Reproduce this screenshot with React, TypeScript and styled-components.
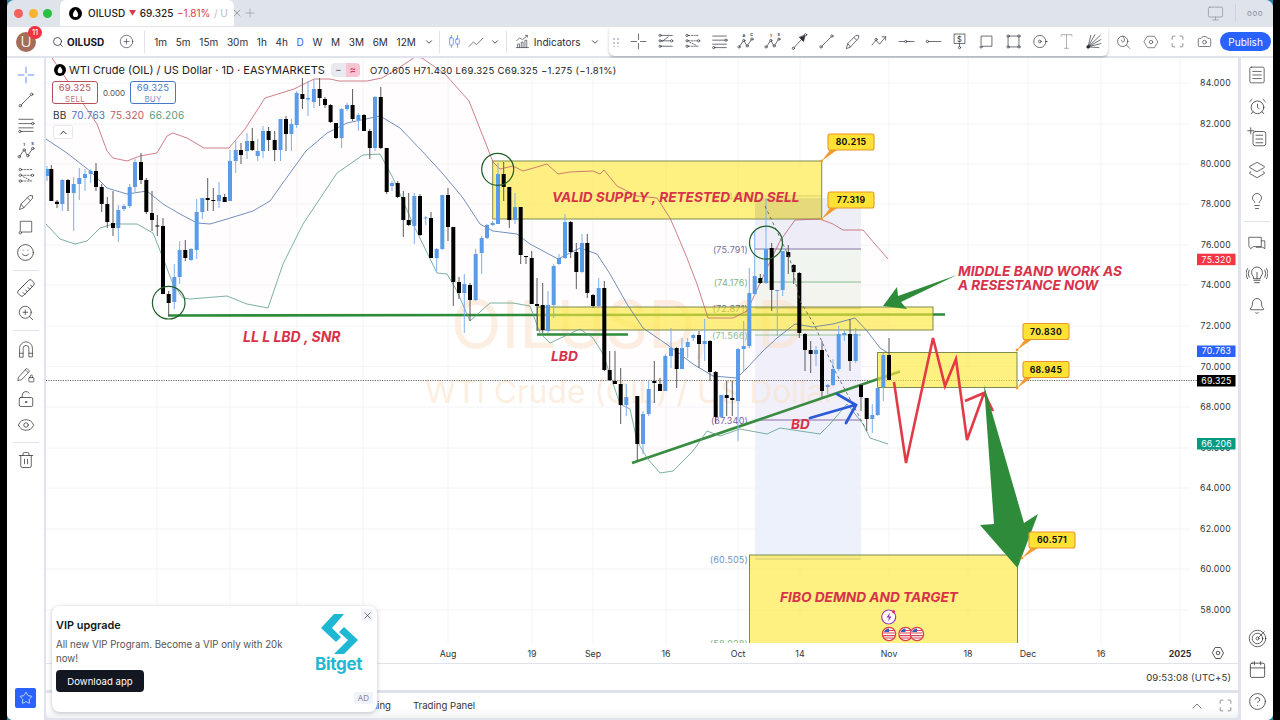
import React from 'react';
import styled, { createGlobalStyle } from 'styled-components';
import {
  AlarmClock, Bell, Calendar, Camera, ChevronDown, ChevronUp, CircleHelp, CirclePlus, Eye,
  Layers2, Lightbulb, LockKeyholeOpen, Monitor, Plus, Ruler, Search, Smile, Star, Trash2, X, ZoomIn,
} from 'lucide-react';

const GlobalStyle = createGlobalStyle`
  html, body { margin: 0; padding: 0; background: #000; overflow: hidden; }
  body { font-family: Inter, "Liberation Sans", sans-serif; color: #131722; }
`;

const Frame = styled.div`
  width: 1280px;
  height: 720px;
  padding: 0 7px;
  box-sizing: border-box;
  background: linear-gradient(90deg, #000 0 7px, #2b86a8 7px 1273px, #000 1273px);
`;

const Window = styled.div`
  position: relative;
  height: 720px;
  display: flex;
  flex-direction: column;
  background: #e0e3eb;
  border-radius: 8px 8px 6px 6px;
  overflow: hidden;
`;

const TitleBar = styled.div`
  height: 26px;
  flex: none;
  display: flex;
  align-items: center;
  background: #dfe3ea;
  padding-left: 7px;
`;

const Light = styled.span<{ $c: string }>`
  width: 9px;
  height: 9px;
  border-radius: 50%;
  margin-right: 5.5px;
  background: ${(p) => p.$c};
`;

const Tab = styled.div`
  width: 174px;
  height: 26px;
  margin-left: 2.5px;
  display: flex;
  align-items: center;
  gap: 3.5px;
  padding-left: 9px;
  box-sizing: border-box;
  background: #fff;
  border-radius: 6px 6px 0 0;
  font-size: 10px;
  font-weight: 500;
  white-space: nowrap;
  color: #222;
`;

const TabIcon = styled.span`
  display: flex;
  margin-right: 2.5px;
`;

const Down = styled.span`
  color: #d9394a;
  font-weight: 400;
`;

const DownMark = styled(Down)`
  font-size: 7.5px;
`;

const Fade = styled.span`
  color: #b8bcc6;
  font-weight: 400;
`;

const TabClose = styled.span`
  display: flex;
  margin-left: auto;
  margin-right: 8px;
  color: #777;
`;

const NewTab = styled.span`
  display: flex;
  margin-left: 9px;
  color: #8b8f99;
`;

const TitleRight = styled.div`
  margin-left: auto;
  display: flex;
  align-items: center;
  color: #8b8f99;
  font-size: 8px;
  letter-spacing: 0.5px;
  gap: 11px;
  padding-right: 10px;
`;

const TitleDivider = styled.span`
  width: 1px;
  height: 18px;
  background: #cfd3db;
`;

const TopBar = styled.div`
  height: 29px;
  margin-top: 1px;
  flex: none;
  display: flex;
  align-items: center;
  background: #fff;
  font-size: 10px;
  color: #2a2e39;
  position: relative;
`;

const Avatar = styled.div`
  position: relative;
  width: 20px;
  height: 20px;
  margin-left: 9px;
  border-radius: 50%;
  background: #a46d58;
  color: #fff;
  font-size: 15px;
  font-weight: 300;
  line-height: 20px;
  text-align: center;
`;

const Badge = styled.span`
  position: absolute;
  top: -6px;
  left: 12px;
  width: 14px;
  height: 13px;
  border-radius: 7px;
  background: #ef3340;
  color: #fff;
  font-size: 7.5px;
  line-height: 13px;
  font-weight: 500;
`;

const SymbolBox = styled.div`
  display: flex;
  align-items: center;
  gap: 3px;
  margin-left: 16px;
  font-weight: 700;
  font-size: 10px;
  color: #131722;
`;

const Spaced = styled.span<{ $l: number }>`
  display: flex;
  align-items: center;
  margin-left: ${(p) => p.$l}px;
`;

const Sep = styled.span<{ $l: number }>`
  width: 1px;
  height: 22px;
  background: #e0e3eb;
  margin-left: ${(p) => p.$l}px;
`;

const Intervals = styled.div`
  display: flex;
  gap: 8.7px;
  margin-left: 9px;
  font-size: 10px;
`;

const Interval = styled.span<{ $on?: boolean }>`
  color: ${(p) => (p.$on ? '#2962ff' : '#2a2e39')};
`;

const DrawCard = styled.div`
  position: relative;
  width: 499px;
  height: 29px;
  flex: none;
  margin-left: 9px;
  display: flex;
  align-items: center;
  background: #fff;
  border-radius: 0 0 6px 6px;
  box-shadow: 0 2px 3px rgba(90, 96, 110, 0.35);
  padding-left: 3px;
  box-sizing: border-box;
`;

const Dots = styled.span`
  width: 9px;
  height: 10px;
  margin-right: 5px;
  background-image: radial-gradient(#c5c8d0 0.8px, transparent 1px);
  background-size: 4px 4px;
`;

const ToolSlot = styled.span`
  width: 26.75px;
  display: flex;
  flex: none;
  justify-content: center;
`;

const Publish = styled.button`
  width: 51px;
  height: 19px;
  flex: none;
  margin-left: 2px;
  padding: 0;
  border: 0;
  border-radius: 10px;
  background: #2962ff;
  color: #fff;
  font-family: inherit;
  font-size: 10px;
`;

const Body = styled.div`
  flex: 1;
  min-height: 0;
  display: flex;
  gap: 2px;
  margin-top: 2px;
`;

const SideBar = styled.div<{ $w: number; $top: number }>`
  width: ${(p) => p.$w}px;
  flex: none;
  display: flex;
  flex-direction: column;
  align-items: center;
  padding-top: ${(p) => p.$top}px;
  box-sizing: border-box;
  background: #fff;
  color: #333;
`;

const SideItem = styled.span`
  height: 25.4px;
  display: flex;
  align-items: center;
  justify-content: center;
  flex: none;
`;

const RightItem = styled(SideItem)`
  height: 31.6px;
`;

const SideRule = styled.span`
  width: 26px;
  height: 1px;
  flex: none;
  margin: 4.5px 0;
  background: #e0e3eb;
`;

const StarButton = styled.span`
  margin-top: auto;
  margin-bottom: 12px;
  width: 21px;
  height: 20px;
  display: flex;
  align-items: center;
  justify-content: center;
  border-radius: 2px;
  background: #2962ff;
  color: #fff;
`;

const BottomTools = styled.div`
  margin-top: auto;
  padding-bottom: 3px;
  display: flex;
  flex-direction: column;
  align-items: center;
  color: #333;
`;

const Main = styled.div`
  width: 1192px;
  flex: none;
  display: flex;
  flex-direction: column;
  margin-right: 1px;
`;

const ChartPane = styled.div`
  position: relative;
  height: 605px;
  flex: none;
  background: #fff;
`;

const ChartSvg = styled.svg`
  display: block;
  width: 1192px;
  height: 605px;
  font-family: Inter, "Liberation Sans", sans-serif;
`;

const PriceText = styled.text`
  font-size: 8.7px;
  letter-spacing: 0.25px;
  fill: #333;
  text-anchor: end;
`;

const TimeText = styled.text<{ $b?: boolean }>`
  font-size: 8.8px;
  fill: #333;
  font-weight: ${(p) => (p.$b ? 700 : 400)};
  text-anchor: middle;
`;

const FibText = styled.text`
  font-size: 9px;
  letter-spacing: 0.2px;
  text-anchor: end;
`;

const Note = styled.text<{ $s: number }>`
  font-size: ${(p) => p.$s}px;
  font-weight: 700;
  font-style: italic;
  fill: #d8324a;
`;

const TagLabel = styled.text`
  font-size: 8.6px;
  font-weight: 700;
  letter-spacing: 0.35px;
  fill: #111;
  text-anchor: middle;
`;

const PriceTagLabel = styled.text`
  font-size: 8.7px;
  letter-spacing: 0.25px;
  fill: #fff;
  text-anchor: middle;
`;

const WaterBig = styled.text`
  font-size: 66px;
  fill: #fbe6cf;
  opacity: 0.62;
`;

const WaterSmall = styled.text`
  font-size: 31.6px;
  fill: #fbe6cf;
  opacity: 0.62;
`;

const LegendBox = styled.div`
  position: absolute;
  top: 5px;
  left: 6px;
  display: flex;
  flex-direction: column;
  align-items: flex-start;
  pointer-events: none;
`;

const LegendTitle = styled.div`
  display: flex;
  align-items: center;
  height: 14px;
  white-space: nowrap;
  font-size: 11px;
  color: #222;
`;

const OilDot = styled.span<{ $s: number }>`
  width: ${(p) => p.$s}px;
  height: ${(p) => p.$s}px;
  flex: none;
  display: flex;
`;

const LegendIcon = styled.span`
  display: flex;
  margin-left: 2px;
`;

const TitleText = styled.span`
  margin-left: 3px;
  width: 262px;
`;

const StatusPill = styled.span`
  width: 29px;
  height: 14px;
  display: flex;
  border-radius: 4px;
  overflow: hidden;
  font-size: 9px;
  line-height: 14px;
  text-align: center;
`;

const PillPart = styled.span<{ $pink?: boolean }>`
  flex: 1;
  background: ${(p) => (p.$pink ? '#f9c4d3' : '#e8eaef')};
  color: ${(p) => (p.$pink ? '#d83c5e' : '#777')};
  font-weight: 700;
`;

const Ohlc = styled.span`
  margin-left: 10px;
  font-size: 9.5px;
  letter-spacing: 0.3px;
`;

const OrderRow = styled.div`
  display: flex;
  align-items: center;
  margin-top: 4px;
`;

const OrderBox = styled.div<{ $c: string }>`
  width: 46px;
  height: 23px;
  box-sizing: border-box;
  border: 1px solid ${(p) => p.$c};
  border-radius: 3px;
  background: #fff;
  color: ${(p) => p.$c};
  font-size: 9.5px;
  letter-spacing: 0.2px;
  line-height: 10.5px;
  text-align: center;
  padding-top: 1px;
`;

const OrderSub = styled.div`
  font-size: 8px;
  opacity: 0.8;
`;

const Spread = styled.span`
  width: 32px;
  text-align: center;
  font-size: 8px;
  color: #555;
`;

const BbRow = styled.div`
  display: flex;
  gap: 5px;
  margin-top: 5px;
  margin-left: 1px;
  font-size: 10px;
  letter-spacing: 0.25px;
  color: #333;
`;

const BbValue = styled.span<{ $c: string }>`
  color: ${(p) => p.$c};
`;

const Collapse = styled.div`
  width: 20px;
  height: 14px;
  margin-top: 4px;
  margin-left: 1px;
  display: flex;
  align-items: center;
  justify-content: center;
  border: 1px solid #e6e8ee;
  border-radius: 2px;
  box-sizing: border-box;
  background: #fff;
`;

const StatusBar = styled.div`
  height: 27px;
  flex: none;
  display: flex;
  align-items: center;
  justify-content: flex-end;
  padding-right: 7px;
  background: #fff;
  border-top: 1px solid #e0e3eb;
  box-sizing: border-box;
  font-size: 9.6px;
  letter-spacing: 0.1px;
  color: #333;
`;

const BottomPanel = styled.div`
  height: 25px;
  flex: none;
  margin-top: 3px;
  display: flex;
  align-items: center;
  padding-left: 298px;
  padding-right: 5px;
  gap: 22px;
  background: linear-gradient(#fff 60%, #f2f3f5);
  border-radius: 0 0 4px 4px;
  font-size: 9.6px;
  color: #333;
`;

const PanelIcons = styled.span`
  margin-left: auto;
  display: flex;
  align-items: center;
  gap: 13px;
`;

const AdCard = styled.div`
  position: absolute;
  left: 45px;
  top: 606px;
  width: 325px;
  height: 106px;
  padding: 11px 4px 0;
  box-sizing: border-box;
  display: flex;
  background: #fff;
  border-radius: 8px;
  box-shadow: 0 1px 4px rgba(40, 50, 70, 0.3);
`;

const AdText = styled.div`
  width: 232px;
`;

const AdHead = styled.div`
  font-size: 10.9px;
  font-weight: 600;
  line-height: 16px;
  color: #131722;
`;

const AdBody = styled.div`
  margin-top: 5px;
  font-size: 9.7px;
  line-height: 13.5px;
  color: #555;
`;

const AdButton = styled.button`
  display: block;
  width: 88px;
  height: 22px;
  margin-top: 5px;
  padding: 0;
  border: 0;
  border-radius: 4px;
  background: #131722;
  color: #fff;
  font-family: inherit;
  font-size: 9.6px;
`;

const BitgetBox = styled.div`
  margin-left: 27px;
  margin-top: -4px;
  display: flex;
  flex-direction: column;
  align-items: center;
`;

const BitgetName = styled.div`
  margin-top: -1px;
  font-size: 17px;
  font-weight: 700;
  letter-spacing: -0.3px;
  line-height: 20px;
  color: #1fb8d3;
`;

const AdClose = styled.span`
  position: absolute;
  top: 3px;
  right: 4px;
  width: 12px;
  height: 12px;
  display: flex;
  align-items: center;
  justify-content: center;
  background: #f0f3fa;
  border-radius: 2px;
  color: #222;
`;

const AdTag = styled.span`
  position: absolute;
  right: 4px;
  bottom: 8px;
  width: 19px;
  height: 12px;
  line-height: 12px;
  text-align: center;
  background: #f0f3fa;
  border-radius: 2px;
  font-size: 8px;
  color: #888;
`;

const IconSvg = styled.svg`
  display: block;
  fill: none;
  stroke: currentColor;
  stroke-width: 1;
  stroke-linecap: round;
  font-family: Inter, "Liberation Sans", sans-serif;
`;

const TinyLetter = styled.text`
  font-size: 5.5px;
  font-weight: 700;
  fill: currentColor;
  stroke: none;
  text-anchor: middle;
`;

const Dollar = styled.text`
  font-size: 11px;
  fill: currentColor;
  stroke: none;
  text-anchor: middle;
`;

const Dot = ({ x, y }: { x: number; y: number }) => <circle cx={x} cy={y} r={1.7} />;

const wave = (
  <>
    <path d="M5.5 21l5-7.5 M12.5 14l3 5.5 M17.5 19l5-7.5" />
    <Dot x={4.5} y={22} /><Dot x={11.5} y={12.5} /><Dot x={16.5} y={20.5} /><Dot x={23.5} y={10.5} />
  </>
);

const glyphs: Record<string, React.ReactNode> = {
  cross: <path d="M14 3v8 M14 17v8 M3 14h8 M17 14h8" />,
  line: <><path d="M7.5 20.5l13-13" /><Dot x={6} y={22} /><Dot x={22} y={6} /></>,
  pitch: <><path d="M8 5h16 M8 13h13 M8 21h16 M9 14l9-7" /><Dot x={6} y={5} /><Dot x={23} y={13} /><Dot x={6} y={13} /><Dot x={6} y={21} /></>,
  channel: <><path d="M8 5h16 M8 13h13 M8 21h16 M10 15l10 5" strokeDasharray="2 2" /><Dot x={6} y={5} /><Dot x={23} y={13} /><Dot x={6} y={13} /><Dot x={6} y={21} /></>,
  rows: <><path d="M4 6h20 M4 12h18 M4 18h20 M8 23h16" /><Dot x={23.5} y={12} /><Dot x={5.5} y={23} /></>,
  waveAC: <>{wave}<TinyLetter x={11.5} y={7}>A</TinyLetter><TinyLetter x={23} y={6}>C</TinyLetter></>,
  wave15: <>{wave}<TinyLetter x={11.5} y={7}>1</TinyLetter><TinyLetter x={23} y={6}>5</TinyLetter></>,
  arrowLine: <><path d="M6 23L17 11" /><path d="M22 5l-2 9-6-6z" fill="currentColor" /><Dot x={5} y={24} /><Dot x={23} y={4} /></>,
  pen: <><path d="M5 24l2-7L19 5l4 0 0 4L11 22z M7 17l4 5 M16 8l4 4" /></>,
  zigzag: <><path d="M3 19l6-7 5 6 9-11 M18 7h5v5" /><Dot x={9} y={11} /></>,
  midDot: <><path d="M3 14h8 M15 14h10" /><Dot x={13} y={14} /></>,
  rayDot: <><path d="M7 14h18" /><Dot x={5} y={14} /></>,
  price: <><rect x="6" y="3" width="16" height="14" /><Dollar x={14} y={14}>$</Dollar><path d="M14 17v4" /><Dot x={14} y={23} /></>,
  comment: <><path d="M8 21h14V6H6v13" /><Dot x={6} y={22} /></>,
  square: <><path d="M7.5 6h13 M7.5 22h13 M6 7.5v13 M22 7.5v13" /><Dot x={6} y={6} /><Dot x={22} y={6} /><Dot x={6} y={22} /><Dot x={22} y={22} /></>,
  ring: <><circle cx="13" cy="14" r="9" /><circle cx="13" cy="14" r="2" /><path d="M22 14l2 0" /></>,
  type: <path d="M6 6V4h16v2 M14 4v20 M11 24h6" />,
  fan: <><path d="M6 22L24 5 M6 22L25 11 M6 22L25 17 M6 22L16 4 M6 22L10 5 M6 22L22 23" /><circle cx="6" cy="22" r="2" fill="currentColor" /></>,
  candle: <><path d="M9 4v20 M19 4v20" /><rect x="6" y="8" width="6" height="12" rx="1" fill="#fff" /><rect x="16" y="10" width="6" height="8" rx="1" fill="#fff" /></>,
  lineChart: <path d="M3 21l7-7 5 4 10-10" />,
  barsUp: <><path d="M4 24h20 M6 24v-6h3v6 M12 24v-9h3v9 M18 24v-12h3v12 M4 13l5-5 5 3 8-7 M19 4h3v3" /></>,
  flameZoom: <><circle cx="12" cy="13" r="8" /><path d="M18 19l5 5 M12 5c2 3 4 5 2 8-1 2-4 1-4-2" /></>,
  hexDot: <><path d="M8 4h12l6 10-6 10H8L2 14z" /><circle cx="14" cy="14" r="3" /></>,
  corners: <path d="M4 10V6a2 2 0 0 1 2-2h3 M19 4h3a2 2 0 0 1 2 2v4 M24 18v4a2 2 0 0 1-2 2h-3 M9 24H6a2 2 0 0 1-2-2v-4" />,
  listDoc: <><rect x="4" y="3" width="20" height="22" rx="2" /><path d="M8 9h12 M8 14h12 M8 19h12" /></>,
  listPlus: <><rect x="8" y="6" width="17" height="19" rx="3" /><path d="M12 11h9 M12 16h9 M12 21h9 M1 5h8 M5 1v8" /></>,
  chats: <path d="M3 6h17v13H9l-4 3-2-3z M20 11h5v11l-3-2H13" />,
  bulbWave: <><path d="M10 22h8 M11 25h6 M9 17a7 7 0 1 1 10 0l-1 3h-8z M14 12v8" /><path d="M4 9a9 9 0 0 0 0 9 M2 7a12 12 0 0 0 0 13 M24 9a9 9 0 0 1 0 9 M26 7a12 12 0 0 1 0 13" /></>,
  pencilLock: <><path d="M4 18L15 6l4 4L8 22l-5 1z M13 8l4 4" /><rect x="18" y="19" width="7" height="6" rx="1" /><path d="M20 19v-2a1.5 1.5 0 0 1 3 0v2" /></>,
  horseshoe: <path d="M5 25V13a9 9 0 0 1 18 0v12h-5V13a4 4 0 0 0-8 0v12z M5 20h5 M18 20h5" />,
  target: <><circle cx="14" cy="14" r="11" /><circle cx="14" cy="14" r="7" /><circle cx="14" cy="14" r="2" /><path d="M15 13l8-8" /></>,
};

const Glyph = ({ name, size = 21, color }: { name: string; size?: number; color?: string }) => (
  <IconSvg viewBox="0 0 28 28" width={size} height={size} style={color ? { color } : undefined}>
    {glyphs[name]}
  </IconSvg>
);

const OilIcon = ({ size }: { size: number }) => (
  <OilDot $s={size}>
    <svg viewBox="0 0 12 12" width={size} height={size}>
      <circle cx="6" cy="6" r="6" fill="#000" />
      <path d="M6 2.2C7.6 4.3 8.4 5.5 8.4 6.9A2.4 2.4 0 0 1 3.6 6.9C3.6 5.5 4.4 4.3 6 2.2z" fill="#fff" />
    </svg>
  </OilDot>
);

type Bar = [number, number, number, number, number, 0 | 1];

const bars: Bar[] = [
  [47, 168, 175, 165, 180, 1], [51.3, 168, 200, 164, 200, 0], [57, 200.7, 203, 199, 207, 0], [62.3, 179, 203, 178, 210, 1],
  [68, 179, 192, 178, 210, 0], [73.7, 183, 192, 176, 230, 1], [79.3, 177, 183, 167, 199, 1], [85, 173, 177, 168, 190, 1],
  [90.7, 170, 173, 168, 182, 1], [96, 170, 186, 162, 190, 0], [101.7, 186, 203, 183, 211, 0], [107.3, 203, 221, 196, 227, 0],
  [113, 222, 227, 190, 235, 0], [118.3, 209, 227, 204, 241, 1], [124, 205, 208, 203, 210, 1], [129.7, 186, 205, 183, 207, 1],
  [135, 161, 186, 158, 191, 1], [141, 161, 179, 152, 183, 0], [146.3, 179, 211, 177, 213, 0], [152, 212, 219, 190, 230, 0],
  [157.3, 224.5, 225.5, 214, 235, 0], [163, 225, 293, 217, 293, 0], [168.7, 293, 302, 290, 315, 0], [174.3, 276, 301, 263, 308, 1],
  [179.7, 249, 276, 240, 283, 1], [185.3, 249, 257, 239, 260, 0], [191, 248, 259, 247, 260, 1], [196.7, 211, 249, 198, 258, 1],
  [202.3, 197, 211, 197, 218, 1], [207.7, 197, 199, 177, 210, 0], [213.3, 199, 200, 187, 210, 0], [219, 194, 200, 181, 207, 1],
  [224.7, 196, 201, 193, 201, 0], [230, 160, 200, 149, 200, 1], [235.7, 149, 160, 140, 172, 1], [241, 149, 154, 142, 163, 0],
  [247, 140, 150, 132, 158, 1], [252.3, 140, 149, 127, 150, 0], [257.7, 150, 155, 138, 160, 1], [263, 130, 150, 125, 157, 1],
  [268.6, 130, 139, 126, 150, 0], [274.7, 139, 149, 130, 160, 0], [280.5, 118, 149, 118, 160, 1], [286, 118, 133, 115, 150, 0],
  [291.4, 123, 133, 118, 150, 1], [296.7, 92, 124, 90, 127, 1], [302.4, 93, 98, 77, 108, 0], [308, 97, 98.5, 80, 115, 1],
  [313.9, 88, 101, 78, 107, 1], [319.6, 88, 97, 77, 105, 0], [325, 98, 104, 96, 107, 0], [330.6, 104, 121, 103, 122, 0],
  [336, 122, 137, 122, 138, 0], [341.6, 108, 137, 107, 147, 1], [347, 104, 108, 102, 110, 1], [352.6, 104, 118, 88, 120, 0],
  [358.4, 114, 119, 112, 130, 1], [364, 114, 130, 113, 130, 0], [369.8, 130, 147, 128, 158, 0], [375, 96, 147, 95, 150, 1],
  [380.8, 96, 147, 86, 148, 0], [386.7, 147, 191, 147, 193, 0], [392, 182, 185, 180, 190, 1], [397.7, 182, 196, 180, 197, 0],
  [403.3, 196, 219, 190, 236, 0], [408.7, 219, 224, 192, 225, 0], [414.3, 195, 225, 192, 243, 1], [420, 195, 234, 193, 235, 0],
  [425.7, 216.5, 217.5, 215, 224, 1], [431, 217, 257, 211, 257, 0], [436.7, 248, 257, 247, 270, 1], [442.3, 194, 248, 194, 249, 1],
  [448, 194, 226, 187, 240, 0], [453.3, 226, 281, 226, 305, 0], [459, 281, 292, 276, 298, 0], [464.3, 283, 292, 273, 332, 1],
  [470, 284, 299, 282, 320, 0], [475.7, 253, 299, 248, 300, 1], [481.7, 237, 252, 235, 273, 1], [487, 224, 237, 223, 238, 1],
  [492.7, 222, 224, 220, 225, 1], [498, 173, 223, 162, 223, 1], [503.7, 173, 186, 161, 200, 0], [509.3, 186, 219, 186, 227, 0],
  [515, 206, 219, 192, 223, 1], [520.7, 206, 254, 206, 263, 0], [526, 255, 256, 255, 263, 0], [531.7, 257, 303, 250, 303, 0],
  [537, 303, 305, 277, 330, 0], [542.7, 304, 329, 282, 332, 0], [548, 304, 330, 290, 332, 1], [553.7, 265, 304, 263, 317, 1],
  [559, 257, 263, 253, 264, 1], [565, 221, 257, 213, 258, 1], [570.7, 221, 251, 220, 257, 0], [576.3, 251, 271, 242, 288, 0],
  [582, 242, 271, 233, 272, 1], [587.3, 242, 292, 233, 297, 0], [593, 294, 305, 293, 307, 0], [598.7, 287, 305, 277, 307, 1],
  [604.3, 287, 369, 280, 370, 0], [609.7, 369, 379, 350, 380, 0], [615, 380, 383, 350, 383, 0], [620.7, 383, 404, 367, 423, 0],
  [626.3, 396, 404, 383, 415, 1], [637.3, 395, 443, 395, 460, 0], [643, 413, 443, 410, 453, 1], [648.7, 388, 413, 380, 415, 1],
  [654.3, 380, 382, 360, 402, 0], [660, 383, 390, 377, 390, 0], [665.3, 355, 390, 353, 390, 1], [671, 347, 355, 327, 367, 1],
  [676.7, 347, 368, 346, 387, 0], [682, 347, 368, 337, 368, 1], [687.7, 341, 346, 337, 357, 1], [693.3, 334, 337, 333, 340, 1],
  [699, 334, 343, 330, 367, 0], [704.7, 340, 343, 318, 360, 1], [710, 340, 371, 339, 380, 0], [715.7, 371, 416, 370, 423, 0],
  [721.3, 394, 416, 394, 417, 1], [726.7, 394, 397, 380, 415, 0], [732.3, 397, 399, 380, 415, 0], [738, 348, 400, 347, 440, 1],
  [743.7, 345, 348, 320, 370, 1], [749.3, 292, 345, 267, 347, 1], [754.7, 275, 293, 230, 294, 1], [760.3, 277, 282, 273, 283, 0],
  [766, 248, 282, 197, 283, 1], [771.7, 247, 289, 242, 310, 0], [777.3, 289, 289.5, 289, 335, 1], [782.7, 250, 289, 250, 295, 1],
  [788.3, 251, 256, 244, 273, 0], [793.7, 264, 271, 263, 283, 0], [799.3, 272, 332, 271, 337, 0], [805, 333, 349, 332, 370, 0],
  [810.7, 349, 353, 340, 372, 0], [816, 349, 353, 345, 365, 1], [822, 349, 390, 340, 397, 0], [827.7, 384, 386, 383, 393, 1],
  [833, 368, 384, 358, 385, 1], [838.7, 333, 368, 325, 370, 1], [844.3, 332, 334, 330, 340, 1], [850, 333, 360, 318, 370, 0],
  [855.7, 333, 360, 327, 362, 1], [861, 384, 396, 383, 410, 0], [866.7, 397, 418, 397, 430, 0], [872.3, 414, 418, 403, 432, 1],
  [877.7, 387, 414, 386, 415, 1], [883.3, 354, 386, 352, 400, 1], [889, 354, 379, 337, 379, 0],
];

const upperBand = '52,57 97,123 107,150 113,157 127,160 140,155 157,152 167,135 173,132 187,137 204,147 229,147 245,128 265,97 294,88 314,78 330,78 339,80 367,80 382,77 400,66 415,56 422,57 445,73 469,100 486,143 493,161 500,168 513,165 523,170 530,168 547,163 558,173 570,171 593,170 600,173 604,169 617,185 637,195 657,197 670,217 677,233 687,257 697,283 708,317 733,317 747,310 755,293 767,267 780,240 795,219 820,218 833,223 843,229 863,229 875,243 888,258';
const middleBand = '46,138 67,152 90,170 107,187 127,193 147,190 163,203 180,213 197,222 210,223 227,218 253,210 270,200 290,172 306,150 327,132 347,122 380,115 400,127 422,150 443,173 463,197 480,223 493,230 517,233 530,243 558,258 580,247 597,253 610,273 627,303 643,327 672,347 693,363 713,375 737,377 747,367 763,350 777,337 795,323 813,326 833,323 855,317 867,330 880,347 888,352';
const lowerBand = '46,223 60,238 75,243 87,240 100,227 113,223 137,223 153,232 163,257 173,283 183,297 190,298 227,295 247,303 268,307 283,263 303,223 337,172 363,154 380,153 393,177 413,223 437,272 447,273 457,290 470,320 490,302 513,302 530,305 540,332 550,342 580,328 593,337 603,353 620,403 630,408 637,440 647,457 660,472 673,470 693,450 707,430 720,435 740,428 767,433 780,427 820,433 830,423 847,403 863,423 870,437 888,443';

const gridX = [157, 230, 297, 363, 448, 532, 593, 666, 738, 800, 889, 968, 1028, 1101, 1180];
const prices: [string, number][] = [
  ['84.000', 82], ['82.000', 123], ['80.000', 163], ['78.000', 203], ['76.000', 244], ['74.000', 284], ['72.000', 325],
  ['70.000', 365.5], ['68.000', 406], ['66.000', 447], ['64.000', 487], ['62.000', 528], ['60.000', 568], ['58.000', 609],
];
const times: [string, number, boolean?][] = [
  ['Aug', 448], ['19', 532], ['Sep', 593], ['16', 666], ['Oct', 738], ['14', 800], ['Nov', 889], ['18', 968],
  ['Dec', 1028], ['16', 1101], ['2025', 1180, true],
];
const fibLevels: [string, number, string][] = [
  ['(75.791)', 248, '#7b6d9c'], ['(74.176)', 281, '#7fb384'], ['(72.871)', 307, '#666'],
  ['(71.566)', 334, '#8fc196'], ['(67.340)', 419, '#7b5fa0'], ['(60.505)', 558, '#6d93c4'],
];

const Tag = ({ x, y, label, px, py }: { x: number; y: number; label: string; px: number; py: number }) => (
  <g>
    <path d={`M${x + 2} ${y + 16}L${px} ${py}L${x + 9} ${y + 16}z`} fill="#f29a2e" />
    <circle cx={px} cy={py} r={1.4} fill="#f29a2e" />
    <rect x={x} y={y} width={46} height={16} rx={2} fill="#ffe234" stroke="#e8962a" strokeWidth={1.1} />
    <TagLabel x={x + 23} y={y + 11.3}>{label}</TagLabel>
  </g>
);

const AxisTag = ({ y, label, fill }: { y: number; label: string; fill: string }) => (
  <g>
    <rect x={1197} y={y} width={38.5} height={11.5} fill={fill} />
    <PriceTagLabel x={1216.5} y={y + 8.9}>{label}</PriceTagLabel>
  </g>
);

const UsFlag = ({ x, y }: { x: number; y: number }) => (
  <g>
    <circle cx={x} cy={y} r={6.6} fill="#fff" stroke="#d8434f" strokeWidth={1.3} />
    <path d={`M${x - 5.5} ${y - 1}h11 M${x - 5.8} ${y + 1.6}h11.6 M${x - 4.6} ${y + 4}h9.2 M${x} ${y - 3.5}h5 `} stroke="#d8434f" strokeWidth={1.2} />
    <path d={`M${x - 5} ${y - 2}a6 6 0 0 1 5 -3.4v3.4z`} fill="#3c5bb5" />
  </g>
);

const Chart = () => (
  <ChartSvg viewBox="46 57 1192 605">
    <defs>
      <clipPath id="plot"><rect x="46" y="57" width="1151" height="585" /></clipPath>
    </defs>
    <g stroke="#f3f4f7" strokeWidth={1}>
      {gridX.map((x) => <line key={x} x1={x} x2={x} y1={57} y2={642} />)}
      {prices.map(([p, y]) => <line key={p} x1={46} x2={1190} y1={y} y2={y} />)}
    </g>
    <g clipPath="url(#plot)">
      <rect x="755" y="197" width="106" height="51" fill="#eeeef7" />
      <rect x="755" y="248" width="106" height="33" fill="#f1f7f1" />
      <rect x="755" y="281" width="106" height="26" fill="#f4f6f0" />
      <rect x="755" y="307" width="106" height="27" fill="#f2f7f2" />
      <rect x="755" y="334" width="106" height="85" fill="#f0f1fb" />
      <rect x="755" y="419" width="106" height="139" fill="#edf1fc" />
      <WaterBig x="451" y="347">OILUSD, 1D</WaterBig>
      <WaterSmall x="425" y="402">WTI Crude (OIL) / US Dollar</WaterSmall>
      <polygon points={`${upperBand} ${lowerBand.split(' ').reverse().join(' ')}`} fill="#f23645" opacity={0.008} />
      <line x1={46} x2={1197} y1={379.5} y2={379.5} stroke="#444" strokeWidth={0.8} strokeDasharray="1.2 1.2" />
      {fibLevels.map(([l, y, c]) => (
        <g key={l}>
          <line x1={755} x2={861} y1={y} y2={y} stroke={c} strokeWidth={y === 307 ? 1.2 : 0.9} />
          <FibText x={748} y={y + 4} fill={c}>{l}</FibText>
        </g>
      ))}
      <FibText x={748} y={199} fill="#7aa0b0">(77.447)</FibText>
      <FibText x={748} y={646} fill="#7fb384">(58.928)</FibText>
      <line x1={765} x2={822} y1={195} y2={195} stroke="#7f9ba3" strokeWidth={0.9} />
      <line x1={168} x2={945} y1={314.5} y2={313.5} stroke="#2e8b3a" strokeWidth={2.6} />
      <line x1={537} x2={628} y1={333.5} y2={333.5} stroke="#2e8b3a" strokeWidth={2.4} />
      <line x1={632} x2={900} y1={462} y2={370.5} stroke="#3a8c42" strokeWidth={2.8} />
      <g fill="#ffe83b" fillOpacity={0.64} stroke="#7d8b4c" strokeWidth={1}>
        <rect x="492.7" y="160" width="329" height="58" />
        <rect x="537.5" y="306" width="395.5" height="23" />
        <rect x="877.5" y="351.5" width="139.5" height="35" />
        <rect x="749.5" y="554" width="268" height="100" />
      </g>
      <rect x="755" y="197" width="66" height="20.5" fill="#6b6b5a" opacity={0.13} />
      <polyline points={upperBand} fill="none" stroke="#c0606a" strokeWidth={0.8} />
      <polyline points={middleBand} fill="none" stroke="#4e74ad" strokeWidth={0.8} />
      <polyline points={lowerBand} fill="none" stroke="#5a9c8c" strokeWidth={0.8} />
      {bars.map(([x, top, bottom, hi, lo, up]) => (
        <g key={x}>
          <line x1={x} x2={x} y1={hi} y2={lo} stroke={up ? '#7fb0ee' : '#5a5a5a'} strokeWidth={1} />
          <rect x={x - 2} y={top} width={4} height={Math.max(bottom - top, 1)} fill={up ? '#5b9ce8' : '#000'} />
        </g>
      ))}
      <polyline
        points="765,205 790,258 800,300 815,325 835,370 851,400 867,430"
        fill="none"
        stroke="#666"
        strokeWidth={0.9}
        strokeDasharray="3 3"
      />
      <g fill="none" stroke="#1e5f28" strokeWidth={1.2}>
        <circle cx={168.7} cy={301.7} r={16.3} />
        <circle cx={497.7} cy={168.3} r={16} />
        <circle cx={766} cy={241.7} r={16.5} />
      </g>
      <Note $s={13.6} x={552} y={201}>VALID SUPPLY , RETESTED AND SELL</Note>
      <Note $s={14} x={243} y={341}>LL L LBD , SNR</Note>
      <Note $s={13.8} x={551} y={360}>LBD</Note>
      <Note $s={13.5} x={791} y={428}>BD</Note>
      <Note $s={13.7} x={958} y={275}>MIDDLE BAND WORK AS</Note>
      <Note $s={13.5} x={958} y={289}>A RESESTANCE NOW</Note>
      <Note $s={13.7} x={780} y={601}>FIBO DEMND AND TARGET</Note>
      <polygon points="957,274 898,295 897,286 883,305 907,308 901,301" fill="#2e8b3a" />
      <polyline
        points="894,381 906,462 933,337 945,385 956,358 967,439 984,392 965,400 984,392 993,410"
        fill="none"
        stroke="#e23a47"
        strokeWidth={2.6}
        strokeLinejoin="miter"
      />
      <polygon points="984,384 994,523 980,524 1017.5,567 1038,513 1024,522" fill="#2e8b3a" />
      <g fill="none" stroke="#2c59d8" strokeWidth={2.8} strokeLinecap="round">
        <path d="M810 417L855 404 M837 393L856 404L846 422" />
      </g>
      <Tag x={828} y={133} label="80.215" px={821.7} py={160} />
      <Tag x={828} y={191} label="77.319" px={821.7} py={218} />
      <Tag x={1023} y={322.5} label="70.830" px={1017} py={349} />
      <Tag x={1023} y={360.5} label="68.945" px={1017} py={387} />
      <Tag x={1029} y={531} label="60.571" px={1022} py={557} />
      <circle cx={888.7} cy={616} r={7} fill="#fff" stroke="#9c3fb5" strokeWidth={1.2} />
      <path d="M890 611.5l-3.5 5h2.5l-1 4 3.5-5h-2.5z" fill="#9c27b0" />
      <circle cx={893.5} cy={610.7} r={1.6} fill="#e8344a" />
      <UsFlag x={889} y={633} />
      <UsFlag x={905.5} y={633} />
      <UsFlag x={917} y={633} />
    </g>
    {prices.map(([p, y]) => <PriceText key={p} x={1231} y={y + 3.2}>{p}</PriceText>)}
    <AxisTag y={252.7} label="75.320" fill="#f23645" />
    <AxisTag y={344.5} label="70.763" fill="#2962ff" />
    <AxisTag y={374} label="69.325" fill="#000" />
    <AxisTag y={437} label="66.206" fill="#089981" />
    {times.map(([t, x, b]) => <TimeText key={t + x} $b={b} x={x} y={655.5}>{t}</TimeText>)}
    <g transform="translate(1212 646)" color="#555">
      <IconSvg as="g"><path d="M3.5 .5h5l3 5.5-3 5.5h-5L.5 6z" /><circle cx="6" cy="6" r="1.8" /></IconSvg>
    </g>
  </ChartSvg>
);

const Legend = () => (
  <LegendBox>
    <LegendTitle>
      <LegendIcon><OilIcon size={12} /></LegendIcon>
      <TitleText>WTI Crude (OIL) / US Dollar · 1D · EASYMARKETS</TitleText>
      <StatusPill>
        <PillPart>−</PillPart>
        <PillPart $pink>≈</PillPart>
      </StatusPill>
      <Ohlc>O70.605 H71.430 L69.325 C69.325 −1.275 (−1.81%)</Ohlc>
    </LegendTitle>
    <OrderRow>
      <OrderBox $c="#b8505c">69.325<OrderSub>SELL</OrderSub></OrderBox>
      <Spread>0.000</Spread>
      <OrderBox $c="#4a78c4">69.325<OrderSub>BUY</OrderSub></OrderBox>
    </OrderRow>
    <BbRow>
      BB
      <BbValue $c="#4a72b5">70.763</BbValue>
      <BbValue $c="#bb5a62">75.320</BbValue>
      <BbValue $c="#5a9c80">66.206</BbValue>
    </BbRow>
    <Collapse><ChevronUp size={11} color="#222" /></Collapse>
  </LegendBox>
);

const AdPopup = () => (
  <AdCard>
    <AdText>
      <AdHead>VIP upgrade</AdHead>
      <AdBody>All new VIP Program. Become a VIP only with 20k now!</AdBody>
      <AdButton>Download app</AdButton>
    </AdText>
    <BitgetBox>
      <svg width="40" height="42" viewBox="318 613 40 42">
        <polygon points="333,614 343,614 331,628 340,637 335,642 320,628" fill="#1fb8d3" />
        <polygon points="343,627 357,640 343,654 333,654 347,640 338,632" fill="#1fb8d3" />
      </svg>
      <BitgetName>Bitget</BitgetName>
    </BitgetBox>
    <AdClose><X size={11} strokeWidth={1.2} /></AdClose>
    <AdTag>AD</AdTag>
  </AdCard>
);

const drawTools = [
  'cross', 'pitch', 'channel', 'rows', 'waveAC', 'wave15', 'arrowLine', 'line', 'pen', 'zigzag',
  'midDot', 'rayDot', 'price', 'comment', 'square', 'ring', 'type', 'fan',
];

const leftGroups = [
  ['cross', 'line', 'rows', 'wave15', 'channel', 'pen', 'comment', 'smile'],
  ['ruler', 'zoom'],
  ['horseshoe', 'pencilLock', 'lock', 'eye'],
  ['trash'],
];

const TurnedRuler = styled(Ruler)`
  transform: rotate(90deg);
`;

const LeftIcon = ({ name }: { name: string }) => {
  if (name === 'smile') return <Smile size={19} strokeWidth={1} />;
  if (name === 'ruler') return <TurnedRuler size={20} strokeWidth={1} />;
  if (name === 'zoom') return <ZoomIn size={18} strokeWidth={1} />;
  if (name === 'lock') return <LockKeyholeOpen size={18} strokeWidth={1} />;
  if (name === 'eye') return <Eye size={18} strokeWidth={1} />;
  if (name === 'trash') return <Trash2 size={18} strokeWidth={1} />;
  return <Glyph name={name} size={20} color={name === 'cross' ? '#2962ff' : undefined} />;
};

export default function App() {
  return (
    <Frame>
      <GlobalStyle />
      <Window>
        <TitleBar>
          <Light $c="#f4605a" />
          <Light $c="#f8b42f" />
          <Light $c="#2ac13f" />
          <Tab>
            <TabIcon><OilIcon size={13} /></TabIcon>
            <span>OILUSD</span>
            <DownMark>▼</DownMark>
            <span>69.325</span>
            <Down>−1.81%</Down>
            <Fade>/ U</Fade>
            <TabClose><X size={12} strokeWidth={1.2} /></TabClose>
          </Tab>
          <NewTab><Plus size={14} strokeWidth={1} /></NewTab>
          <TitleRight>
            <Monitor size={17} strokeWidth={1} />
            <TitleDivider />
            <span>ooo</span>
          </TitleRight>
        </TitleBar>
        <TopBar>
          <Avatar>U<Badge>11</Badge></Avatar>
          <SymbolBox>
            <Search size={12} strokeWidth={1.4} />
            OILUSD
          </SymbolBox>
          <Spaced $l={15}><CirclePlus size={15} strokeWidth={1} /></Spaced>
          <Sep $l={10} />
          <Intervals>
            {['1m', '5m', '15m', '30m', '1h', '4h', 'D', 'W', 'M', '3M', '6M', '12M'].map((t) => (
              <Interval key={t} $on={t === 'D'}>{t}</Interval>
            ))}
          </Intervals>
          <Spaced $l={8}><ChevronDown size={10} /></Spaced>
          <Sep $l={5} />
          <Spaced $l={6.5}><Glyph name="candle" size={17} color="#2962ff" /></Spaced>
          <Spaced $l={3.5}><Glyph name="lineChart" size={18} /></Spaced>
          <Spaced $l={5}><ChevronDown size={10} /></Spaced>
          <Sep $l={6} />
          <Spaced $l={7.5}><Glyph name="barsUp" size={17} /></Spaced>
          <Spaced $l={2.5}>Indicators</Spaced>
          <Spaced $l={9}><ChevronDown size={10} /></Spaced>
          <DrawCard>
            <Dots />
            {drawTools.map((name) => (
              <ToolSlot key={name}>
                <Glyph name={name} size={19} color={name === 'type' ? '#8a8e98' : undefined} />
              </ToolSlot>
            ))}
          </DrawCard>
          <Spaced $l={3.5} />
          <ToolSlot><Glyph name="flameZoom" size={18} /></ToolSlot>
          <ToolSlot><Glyph name="hexDot" size={16} /></ToolSlot>
          <ToolSlot><Glyph name="corners" size={15} /></ToolSlot>
          <ToolSlot><Camera size={15} strokeWidth={1} /></ToolSlot>
          <Publish>Publish</Publish>
        </TopBar>
        <Body>
          <SideBar $w={37} $top={4}>
            {leftGroups.map((group, i) => (
              <React.Fragment key={group[0]}>
                {i > 0 && <SideRule />}
                {group.map((name) => (
                  <SideItem key={name}><LeftIcon name={name} /></SideItem>
                ))}
              </React.Fragment>
            ))}
            <StarButton><Star size={14} strokeWidth={1.2} /></StarButton>
          </SideBar>
          <Main>
            <ChartPane>
              <Chart />
              <Legend />
            </ChartPane>
            <StatusBar>09:53:08 (UTC+5)</StatusBar>
            <BottomPanel>
              <span>Publishing</span>
              <span>Trading Panel</span>
              <PanelIcons>
                <ChevronUp size={16} strokeWidth={1} />
                <Glyph name="corners" size={15} />
              </PanelIcons>
            </BottomPanel>
          </Main>
          <SideBar $w={32} $top={1}>
            <RightItem><Glyph name="listDoc" size={20} /></RightItem>
            <RightItem><AlarmClock size={19} strokeWidth={1} /></RightItem>
            <RightItem><Glyph name="listPlus" size={21} /></RightItem>
            <RightItem><Layers2 size={18} strokeWidth={1} /></RightItem>
            <RightItem><Lightbulb size={18} strokeWidth={1} /></RightItem>
            <SideRule />
            <RightItem><Glyph name="chats" size={20} /></RightItem>
            <RightItem><Glyph name="bulbWave" size={22} /></RightItem>
            <RightItem><Bell size={18} strokeWidth={1} /></RightItem>
            <BottomTools>
              <RightItem><Glyph name="target" size={21} /></RightItem>
              <RightItem><Calendar size={19} strokeWidth={1} /></RightItem>
              <RightItem><CircleHelp size={19} strokeWidth={1} /></RightItem>
            </BottomTools>
          </SideBar>
        </Body>
        <AdPopup />
      </Window>
    </Frame>
  );
}
